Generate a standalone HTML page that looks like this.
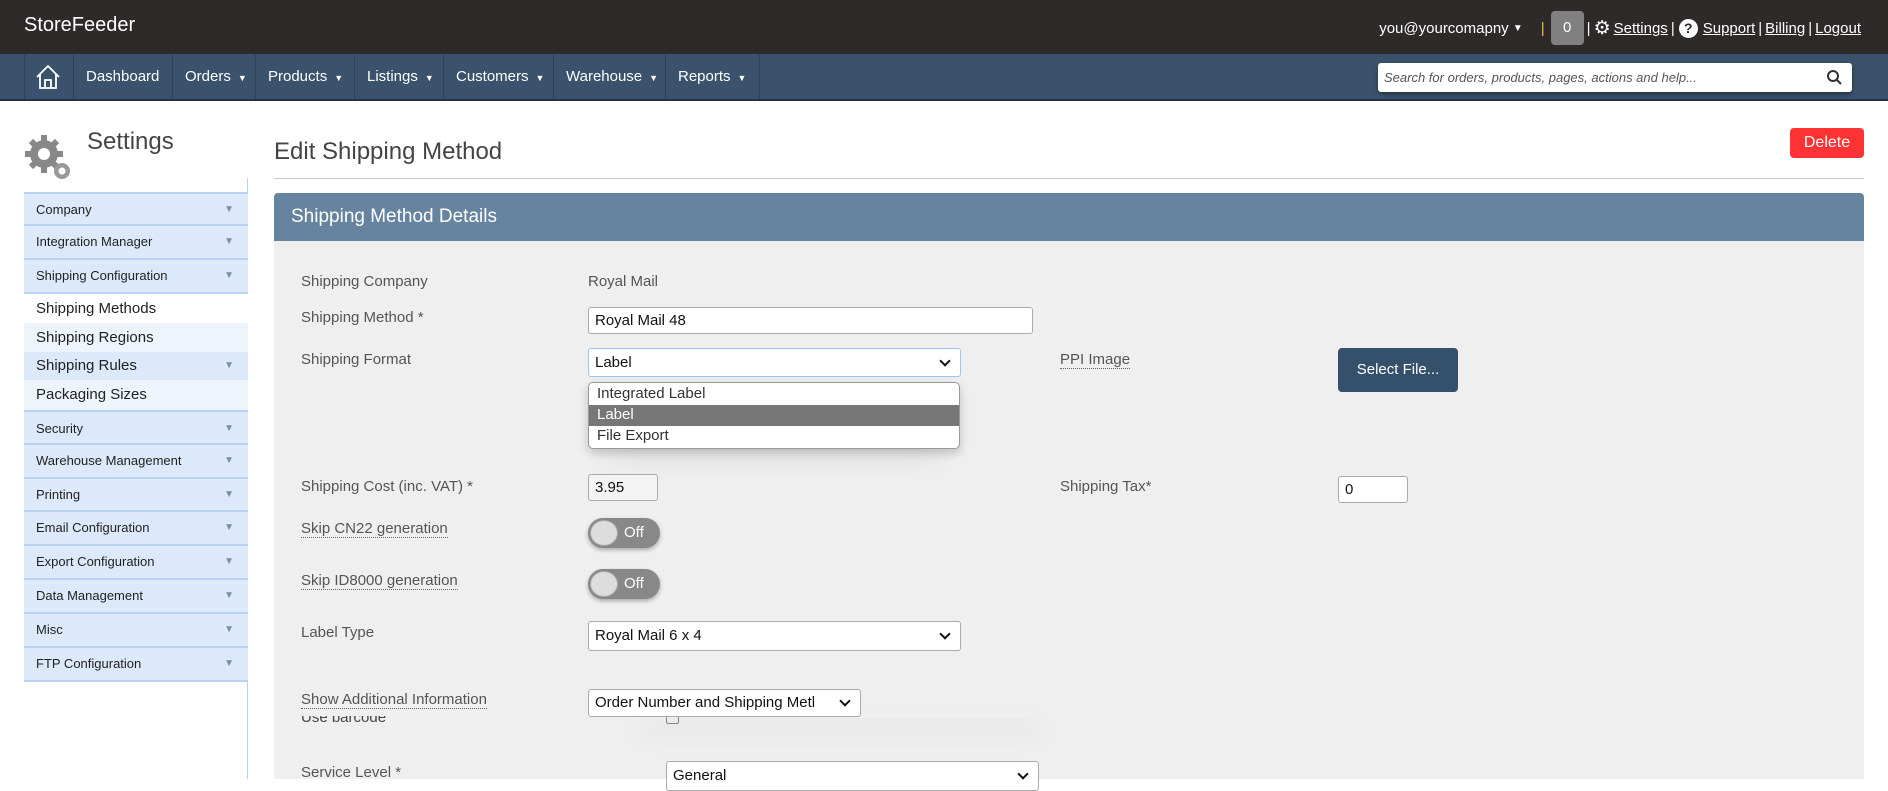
<!DOCTYPE html>
<html><head><meta charset="utf-8"><style>
*{box-sizing:border-box;margin:0;padding:0}
body{width:1888px;height:779px;overflow:hidden;background:#fff;font-family:"Liberation Sans",sans-serif;position:relative;color:#333}
.a{position:absolute}
#top{left:0;top:0;width:1888px;height:54px;background:#2d2a29}
#nav{left:0;top:54px;width:1888px;height:47px;background:#3a526b;border-bottom:2px solid #223345}
.ni{position:absolute;top:0;height:45px;line-height:45px;color:#fff;font-size:15px;border-left:1px solid #2e4258;padding-left:12px}
.car{font-size:9px;margin-left:7px}
.sb{position:absolute;left:24px;width:224px;background:#dbe9fa;border-bottom:2px solid #b8d3f2;font-size:13px;color:#222;padding-left:12px}
.sb .t{position:absolute;right:14px;top:0;color:#7a8da3;font-size:10px}
.sub{position:absolute;left:24px;width:224px;font-size:15px;color:#222;padding-left:12px}
.lbl{position:absolute;left:301px;font-size:15px;color:#555}
.dot{border-bottom:1px dotted #666}
.inp{position:absolute;background:#fff;border:1px solid #aaa;border-radius:3px;font-size:15px;color:#111;padding-left:6px}
.sel:after{content:"";position:absolute;right:11px;top:50%;margin-top:-6px;width:6px;height:6px;border-right:2px solid #111;border-bottom:2px solid #111;transform:rotate(45deg)}
.tog{position:absolute;left:588px;width:72px;height:30px;border-radius:15px;background:#888;box-shadow:0 2px 4px rgba(0,0,0,.3)}
.tog .k{position:absolute;left:2px;top:2px;width:28px;height:26px;border-radius:50%;background:#ddd;border:1px solid #aaa}
.tog span{position:absolute;left:36px;top:6px;color:#fff;font-size:15px}
#tr{right:24px;top:11px;height:34px;display:flex;align-items:center;color:#fff;font-size:15px;white-space:nowrap}
#tr u{margin:0 3px}
</style></head><body>
<div id="top" class="a"></div>
<div class="a" style="left:24px;top:14px;color:#fff;font-size:20px">StoreFeeder</div>
<div id="tr" class="a">you@yourcomapny&nbsp;<span style="font-size:10px">▼</span><span style="color:#e8c04a;margin:0 6px 0 18px">|</span><span style="width:33px;height:34px;background:#808080;border-radius:4px;text-align:center;line-height:34px">0</span><span style="margin:0 3px">|</span><span style="font-size:19px">⚙</span><u>Settings</u>|<span style="display:inline-block;width:19px;height:19px;border-radius:50%;background:#fff;color:#2d2a29;text-align:center;font-weight:bold;font-size:14px;line-height:19px;margin:0 2px 0 4px">?</span><u>Support</u>|<u>Billing</u>|<u>Logout</u></div>
<div id="nav" class="a">
<div class="ni" style="left:24px;width:49px;padding-left:8px"><svg width="30" height="30" viewBox="0 0 30 30" style="margin-top:8px" fill="none" stroke="#fff" stroke-width="1.8"><path d="M4 15 L15 4 L26 15 M7 12 V26 H23 V12 M12 26 V18 H18 V26"/></svg></div>
<div class="ni" style="left:73px">Dashboard</div>
<div class="ni" style="left:172px">Orders<span class="car">▼</span></div>
<div class="ni" style="left:255px">Products<span class="car">▼</span></div>
<div class="ni" style="left:354px">Listings<span class="car">▼</span></div>
<div class="ni" style="left:443px">Customers<span class="car">▼</span></div>
<div class="ni" style="left:553px">Warehouse<span class="car">▼</span></div>
<div class="ni" style="left:665px;border-right:1px solid #2e4258;width:95px">Reports<span class="car">▼</span></div>
<div class="a" style="left:1378px;top:9px;width:474px;height:29px;background:#fff;border-radius:3px;box-shadow:0 2px 4px rgba(0,0,0,.4);font-size:13px;font-style:italic;color:#555;padding:7px 6px">Search for orders, products, pages, actions and help...<svg class="a" style="right:10px;top:6px" width="16" height="16" viewBox="0 0 16 16" fill="none" stroke="#333" stroke-width="2"><circle cx="7" cy="7" r="5"/><path d="M11 11 L15 15"/></svg></div>
</div>
<svg class="a" style="left:24px;top:132px" width="50" height="50" viewBox="0 0 50 50"><g fill="#888"><circle cx="20" cy="22" r="14"/><g stroke="#888" stroke-width="6"><path d="M20 3V41M1 22H39M7 9L33 35M33 9L7 35"/></g><circle cx="20" cy="22" r="6" fill="#fff"/><circle cx="38" cy="39" r="8" fill="#999"/><circle cx="38" cy="39" r="3.5" fill="#fff"/></g></svg>
<div class="a" style="left:87px;top:128px;font-size:24px;color:#444">Settings</div>
<div class="a" style="left:247px;top:178px;width:1px;height:601px;background:#b8d3f2"></div>
<div class="sb" style="top:192px;height:34px;line-height:32px;border-top:2px solid #b8d3f2">Company<span class="t">▼</span></div>
<div class="sb" style="top:226px;height:34px;line-height:32px">Integration Manager<span class="t">▼</span></div>
<div class="sb" style="top:260px;height:34px;line-height:32px">Shipping Configuration<span class="t">▼</span></div>
<div class="sub" style="top:294px;height:29px;line-height:30px;background:#fff">Shipping Methods</div>
<div class="sub" style="top:323px;height:29px;line-height:29px;background:#edf4fc">Shipping Regions</div>
<div class="sub" style="top:352px;height:28px;line-height:28px;background:#dbe9fa">Shipping Rules<span style="position:absolute;right:14px;color:#7a8da3;font-size:10px">▼</span></div>
<div class="sub" style="top:380px;height:30px;line-height:29px;background:#edf4fc">Packaging Sizes</div>
<div class="sb" style="top:410px;height:35px;line-height:33px;border-top:2px solid #b8d3f2">Security<span class="t">▼</span></div>
<div class="sb" style="top:445px;height:34px;line-height:32px">Warehouse Management<span class="t">▼</span></div>
<div class="sb" style="top:479px;height:33px;line-height:31px">Printing<span class="t">▼</span></div>
<div class="sb" style="top:512px;height:34px;line-height:32px">Email Configuration<span class="t">▼</span></div>
<div class="sb" style="top:546px;height:34px;line-height:32px">Export Configuration<span class="t">▼</span></div>
<div class="sb" style="top:580px;height:34px;line-height:32px">Data Management<span class="t">▼</span></div>
<div class="sb" style="top:614px;height:34px;line-height:32px">Misc<span class="t">▼</span></div>
<div class="sb" style="top:648px;height:34px;line-height:32px">FTP Configuration<span class="t">▼</span></div>

<div class="a" style="left:274px;top:138px;font-size:24px;color:#444">Edit Shipping Method</div>
<div class="a" style="left:1790px;top:128px;width:74px;height:30px;background:#f33;border-radius:4px;color:#fff;font-size:16px;text-align:center;line-height:30px">Delete</div>
<div class="a" style="left:274px;top:178px;width:1590px;height:1px;background:#ccc"></div>
<div class="a" style="left:274px;top:193px;width:1590px;height:48px;background:#66839f;border-radius:4px 4px 0 0;color:#fff;font-size:19px;padding:13px 17px">Shipping Method Details</div>
<div class="a" style="left:274px;top:241px;width:1590px;height:538px;background:#efefef"></div>
<div class="a" style="left:640px;top:712px;width:400px;height:6px;box-shadow:0 14px 28px rgba(0,0,0,.12);background:#efefef"></div>
<div class="a" style="left:610px;top:430px;width:330px;height:10px;box-shadow:0 14px 30px rgba(0,0,0,.14);background:#efefef"></div>

<div class="lbl" style="top:273px">Shipping Company</div><div class="a" style="left:588px;top:273px;font-size:15px;color:#555">Royal Mail</div>
<div class="lbl" style="top:309px">Shipping Method *</div><div class="inp" style="left:588px;top:307px;width:445px;height:27px;line-height:25px">Royal Mail 48</div>
<div class="lbl" style="top:351px">Shipping Format</div><div class="inp sel" style="left:588px;top:348px;width:373px;height:29px;line-height:27px;border-color:#9cc4ee">Label</div>
<div class="a" style="left:588px;top:382px;width:372px;height:67px;background:#fff;border:1px solid #999;border-radius:5px;font-size:15px;overflow:hidden;box-shadow:0 4px 10px rgba(0,0,0,.2)">
<div style="padding:2px 8px;height:22px">Integrated Label</div>
<div style="padding:1px 8px;height:21px;background:#777;color:#fff">Label</div>
<div style="padding:1px 8px">File Export</div></div>
<div class="a dot" style="left:1060px;top:351px;font-size:15px;color:#555">PPI Image</div>
<div class="a" style="left:1338px;top:348px;width:120px;height:44px;background:#34506a;border-radius:4px;color:#fff;font-size:15px;text-align:center;line-height:44px">Select File...</div>

<div class="lbl" style="top:478px">Shipping Cost (inc. VAT) *</div><div class="inp" style="left:588px;top:474px;width:70px;height:27px;line-height:25px;background:#f4f4f4">3.95</div>
<div class="a" style="left:1060px;top:478px;font-size:15px;color:#555">Shipping Tax*</div><div class="inp" style="left:1338px;top:476px;width:70px;height:27px;line-height:25px">0</div>
<div class="lbl dot" style="top:520px">Skip CN22 generation</div><div class="tog" style="top:518px"><div class="k"></div><span>Off</span></div>
<div class="lbl dot" style="top:572px">Skip ID8000 generation</div><div class="tog" style="top:569px"><div class="k"></div><span>Off</span></div>
<div class="lbl" style="top:624px">Label Type</div><div class="inp sel" style="left:588px;top:621px;width:373px;height:30px;line-height:28px">Royal Mail 6 x 4</div>
<div class="lbl" style="top:716px;height:12px;overflow:hidden;line-height:4px;color:#444">Use barcode</div>
<div class="a" style="left:666px;top:716px;width:13px;height:8px;border:1px solid #888;border-top:none;border-radius:0 0 2px 2px"></div>
<div class="lbl dot" style="top:691px">Show Additional Information</div><div class="inp sel" style="left:588px;top:689px;width:273px;height:28px;line-height:26px;white-space:nowrap;overflow:hidden;padding-right:22px">Order Number and Shipping Metl</div>
<div class="lbl" style="top:764px">Service Level *</div><div class="inp sel" style="left:666px;top:761px;width:373px;height:30px;line-height:28px">General</div>
</body></html>
